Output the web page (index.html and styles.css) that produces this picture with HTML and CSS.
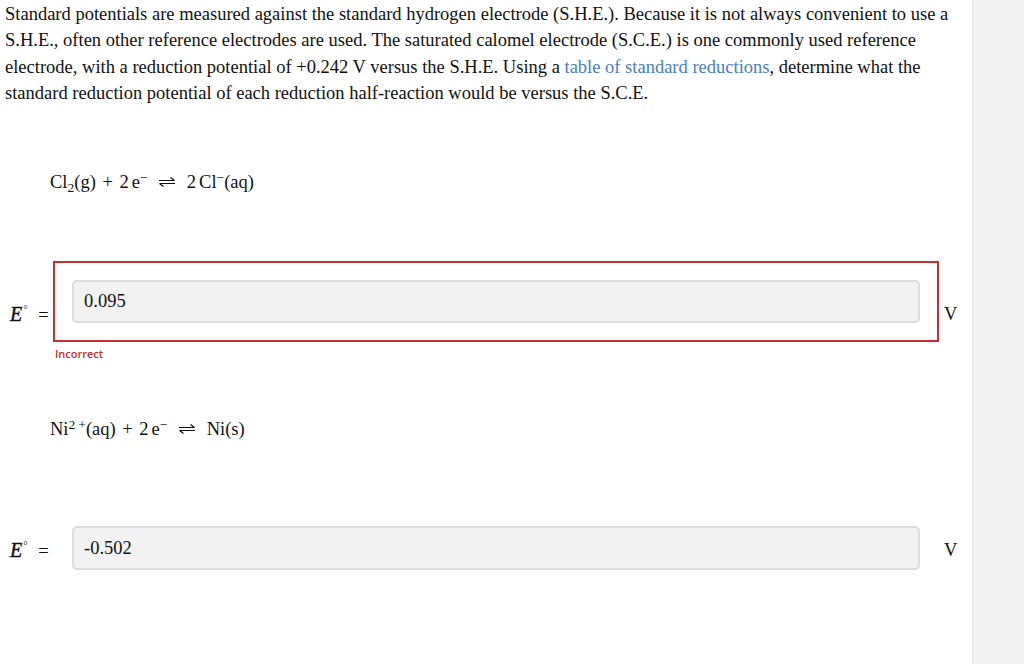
FILE: index.html
```html
<!DOCTYPE html>
<html>
<head>
<meta charset="utf-8">
<link rel="stylesheet" href="styles.css">
</head>
<body>
<div class="page">
  <div class="main">
    <p class="intro">Standard potentials are measured against the standard hydrogen electrode (S.H.E.). Because it is not always convenient to use a S.H.E., often other reference electrodes are used. The saturated calomel electrode (S.C.E.) is one commonly used reference electrode, with a reduction potential of +0.242 V versus the S.H.E. Using a <a class="link" href="#">table of standard reductions</a>, determine what the standard reduction potential of each reduction half-reaction would be versus the S.C.E.</p>

    <div class="eq eq-first">Cl<sub>2</sub>(g) <span class="op">+</span> 2<span class="thin"></span>e<sup>−</sup> <svg class="arrow" width="18" height="10" viewBox="0 0 18 10"><path d="M1 3.5H16.5M16.5 3.5L12.5 0.5" fill="none" stroke="#111" stroke-width="1.2"/><path d="M17 6.5H1.5M1.5 6.5L5.5 9.5" fill="none" stroke="#111" stroke-width="1.2"/></svg> 2<span class="thin"></span>Cl<sup>−</sup>(aq)</div>

    <div class="row">
      <div class="label"><i>E</i><sup class="deg">°</sup> =</div>
      <div class="box box-wrong">
        <div class="input">0.095</div>
      </div>
      <div class="unit">V</div>
    </div>
    <div class="feedback">Incorrect</div>

    <div class="eq eq-second">Ni<sup>2<span class="thin"></span>+</sup>(aq) <span class="op">+</span> 2<span class="thin"></span>e<sup>−</sup> <svg class="arrow" width="18" height="10" viewBox="0 0 18 10"><path d="M1 3.5H16.5M16.5 3.5L12.5 0.5" fill="none" stroke="#111" stroke-width="1.2"/><path d="M17 6.5H1.5M1.5 6.5L5.5 9.5" fill="none" stroke="#111" stroke-width="1.2"/></svg> Ni(s)</div>

    <div class="row row-second">
      <div class="label"><i>E</i><sup class="deg">°</sup> =</div>
      <div class="box">
        <div class="input input-second">-0.502</div>
      </div>
      <div class="unit">V</div>
    </div>
  </div>
  <div class="side"></div>
</div>
</body>
</html>
```

FILE: styles.css
```css
html, body {
  margin: 0;
  padding: 0;
  background: #ffffff;
}

body {
  font-family: "Liberation Serif", "Times New Roman", serif;
  font-size: 18.5px;
  color: #111111;
}

.page {
  display: flex;
  min-height: 664px;
}

.main {
  width: 972px;
  flex: none;
  box-sizing: border-box;
  padding: 1px 0 0 5px;
}

.side {
  flex: 1;
  background: #f2f2f2;
  box-shadow: inset 2px 0 2px -1px #e2e2e2;
}

.intro {
  margin: 0;
  line-height: 26.4px;
}

.link {
  color: #4a80bd;
  text-decoration: none;
}

.eq {
  line-height: 26px;
  padding-left: 45px;
  white-space: nowrap;
}

.eq sub, .eq sup {
  font-size: 13.5px;
  line-height: 0;
}

.eq sub {
  vertical-align: -4px;
}

.eq sup {
  vertical-align: 6px;
}

.op {
  margin: 0 2px;
}

.thin {
  display: inline-block;
  width: 3px;
}

.arrow {
  display: inline-block;
  vertical-align: 1px;
  margin: 0 6px;
}

.eq-first {
  margin-top: 62px;
}

.eq-second {
  margin-top: 54px;
}

.row {
  display: flex;
  align-items: flex-start;
  margin-top: 66px;
}

.row-second {
  margin-top: 65px;
}

.label {
  width: 48px;
  flex: none;
  padding-left: 5px;
  box-sizing: border-box;
  line-height: 26px;
  margin-top: 40px;
  white-space: nowrap;
}

.label i {
  font-size: 20px;
  -webkit-text-stroke: 0.4px #111;
}

.deg {
  font-size: 11px;
  line-height: 0;
  vertical-align: 8px;
  margin-left: 1px;
  margin-right: 6px;
}

.box {
  width: 886px;
  flex: none;
  box-sizing: border-box;
  border: 2px solid transparent;
  padding: 17px;
}

.box-wrong {
  border-color: #c5302f;
}

.input {
  height: 43px;
  box-sizing: border-box;
  border: 2px solid #dddddd;
  border-radius: 5px;
  background: #f2f2f2;
  padding: 0 10px;
  line-height: 39px;
  font-size: 18.5px;
}

.input-second {
  height: 44px;
  line-height: 40px;
}

.unit {
  margin-left: 5px;
  line-height: 26px;
  margin-top: 40px;
}

.row-second .label,
.row-second .unit {
  margin-top: 30px;
}

.feedback {
  margin: 4px 0 0 50px;
  font-family: "Open Sans", "Liberation Sans", sans-serif;
  font-weight: 600;
  font-size: 11px;
  line-height: 16px;
  color: #c5302f;
}
```
